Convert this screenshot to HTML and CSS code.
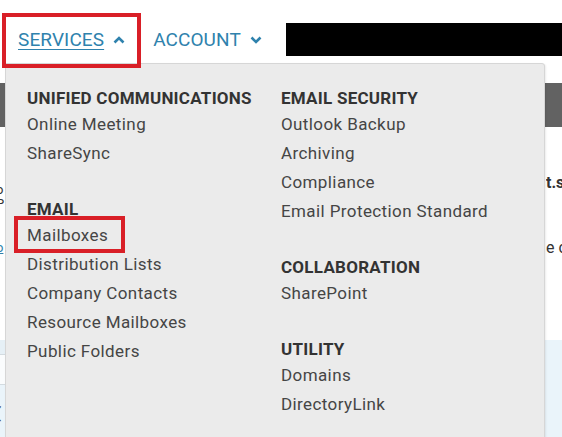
FILE: index.html
```html
<!DOCTYPE html>
<html>
<head>
<meta charset="utf-8">
<link rel="stylesheet" href="styles.css">
</head>
<body>
<div class="page">
  <header class="header">
    <nav class="nav">
      <a class="nav-item active marked">SERVICES
        <svg class="chev" width="12" height="8" viewBox="0 0 12 8"><polyline points="1.5,6.5 6,2 10.5,6.5" fill="none" stroke="#2f82ad" stroke-width="2.6"/></svg>
      </a>
      <a class="nav-item">ACCOUNT
        <svg class="chev" width="12" height="8" viewBox="0 0 12 8"><polyline points="1.5,1.5 6,6 10.5,1.5" fill="none" stroke="#2f82ad" stroke-width="2.6"/></svg>
      </a>
    </nav>
    <div class="redacted"></div>
  </header>

  <div class="darkbar"></div>

  <main class="content">
    <div class="columns">
      <div class="side">
        <p class="sline first">o</p>
        <p class="sline">P</p>
        <p class="sline link">o</p>
      </div>
      <div class="main">
        <p class="mline bold">t.server.net</p>
        <p class="mline second">e control panel</p>
      </div>
    </div>
    <section class="bluepanel">
      <div class="side-rows">
        <div class="srow r1"></div>
        <div class="srow r2"></div>
        <div class="srow r3">(</div>
      </div>
    </section>
  </main>

  <div class="dropdown">
    <div class="col">
      <div class="group">
        <div class="heading">UNIFIED COMMUNICATIONS</div>
        <a class="item">Online Meeting</a>
        <a class="item">ShareSync</a>
      </div>
      <div class="group">
        <div class="heading">EMAIL</div>
        <a class="item"><span class="marked-item">Mailboxes</span></a>
        <a class="item">Distribution Lists</a>
        <a class="item">Company Contacts</a>
        <a class="item">Resource Mailboxes</a>
        <a class="item">Public Folders</a>
      </div>
    </div>
    <div class="col">
      <div class="group">
        <div class="heading">EMAIL SECURITY</div>
        <a class="item">Outlook Backup</a>
        <a class="item">Archiving</a>
        <a class="item">Compliance</a>
        <a class="item">Email Protection Standard</a>
      </div>
      <div class="group">
        <div class="heading">COLLABORATION</div>
        <a class="item">SharePoint</a>
      </div>
      <div class="group">
        <div class="heading">UTILITY</div>
        <a class="item">Domains</a>
        <a class="item">DirectoryLink</a>
      </div>
    </div>
  </div>
</div>
</body>
</html>
```

FILE: styles.css
```css
*, *::before, *::after { box-sizing: border-box; }
html, body { margin: 0; padding: 0; background: #fff; }
body { font-family: Roboto, "Liberation Sans", sans-serif; overflow: hidden; }
.page { position: relative; width: 562px; height: 437px; overflow: hidden; }

.header { height: 63px; display: flex; align-items: flex-start; }
.nav { display: flex; gap: 28px; padding: 29px 0 0 18px; }
.nav-item {
  position: relative;
  display: flex; align-items: center; gap: 9px;
  font-size: 19px; line-height: 22px; color: #2f82ad;
  letter-spacing: 0.1px;
  white-space: nowrap;
}
.nav-item.active { text-decoration: underline; text-underline-offset: 3px; text-decoration-thickness: 1px; }
.chev { display: block; margin-top: -1px; }
.marked::after {
  content: ""; position: absolute; z-index: 5;
  left: -16px; top: -16px; width: 139px; height: 55px;
  border: 4px solid #d91f27;
}
.redacted { margin: 23px 0 0 auto; width: 276px; height: 33px; background: #000; }

.darkbar { margin-top: 20px; height: 44px; background: #626262; }

.content { display: flex; flex-direction: column; }
.columns { height: 213px; display: flex; }
.side { width: 5px; overflow: hidden; flex: none; }
.main { margin-left: auto; width: 16px; overflow: hidden; flex: none; }
.sline { margin: 0 0 0 -4px; font-size: 13px; line-height: 14px; color: #333; white-space: nowrap; }
.sline.first { margin-top: 56px; }
.sline.link { margin-top: 30px; color: #2f82ad; text-decoration: underline; }
.mline { margin: 0; font-size: 16px; line-height: 20px; color: #333; white-space: nowrap; }
.mline.bold { font-weight: bold; margin-top: 46px; }
.mline.second { margin-top: 45px; }

.bluepanel { flex: 1; background: #eaf4fa; height: 110px; }
.side-rows { width: 5px; overflow: hidden; }
.srow { border-bottom: 1px solid #d3dbe0; }
.r1 { height: 15px; background: #e6f0f6; }
.r2 { height: 30px; background: #fafcfd; }
.r3 { border: 0; margin-left: -4px; font-size: 15px; line-height: 56px; color: #333; white-space: nowrap; }

.dropdown {
  position: absolute; z-index: 3;
  left: 5px; top: 63px; width: 540px; height: 390px;
  background: #ebebeb;
  border: 1px solid #d6d6d6;
  border-top-right-radius: 3px;
  box-shadow: 1px 1px 2px rgba(0,0,0,0.08);
  display: grid; grid-template-columns: 254px 1fr;
  padding: 23px 0 0 21px;
}
.col { display: flex; flex-direction: column; gap: 30px; }
.group { display: flex; flex-direction: column; }
.heading { font-size: 17px; font-weight: bold; line-height: 23px; color: #333; white-space: nowrap; letter-spacing: 0.25px; }
.item { font-size: 17px; line-height: 29px; color: #454545; white-space: nowrap; letter-spacing: 0.4px; }
.marked-item { position: relative; display: inline-block; }
.marked-item::after {
  content: ""; position: absolute;
  left: -13px; top: -5px; width: 111px; height: 37px;
  border: 4px solid #d91f27;
}
```
